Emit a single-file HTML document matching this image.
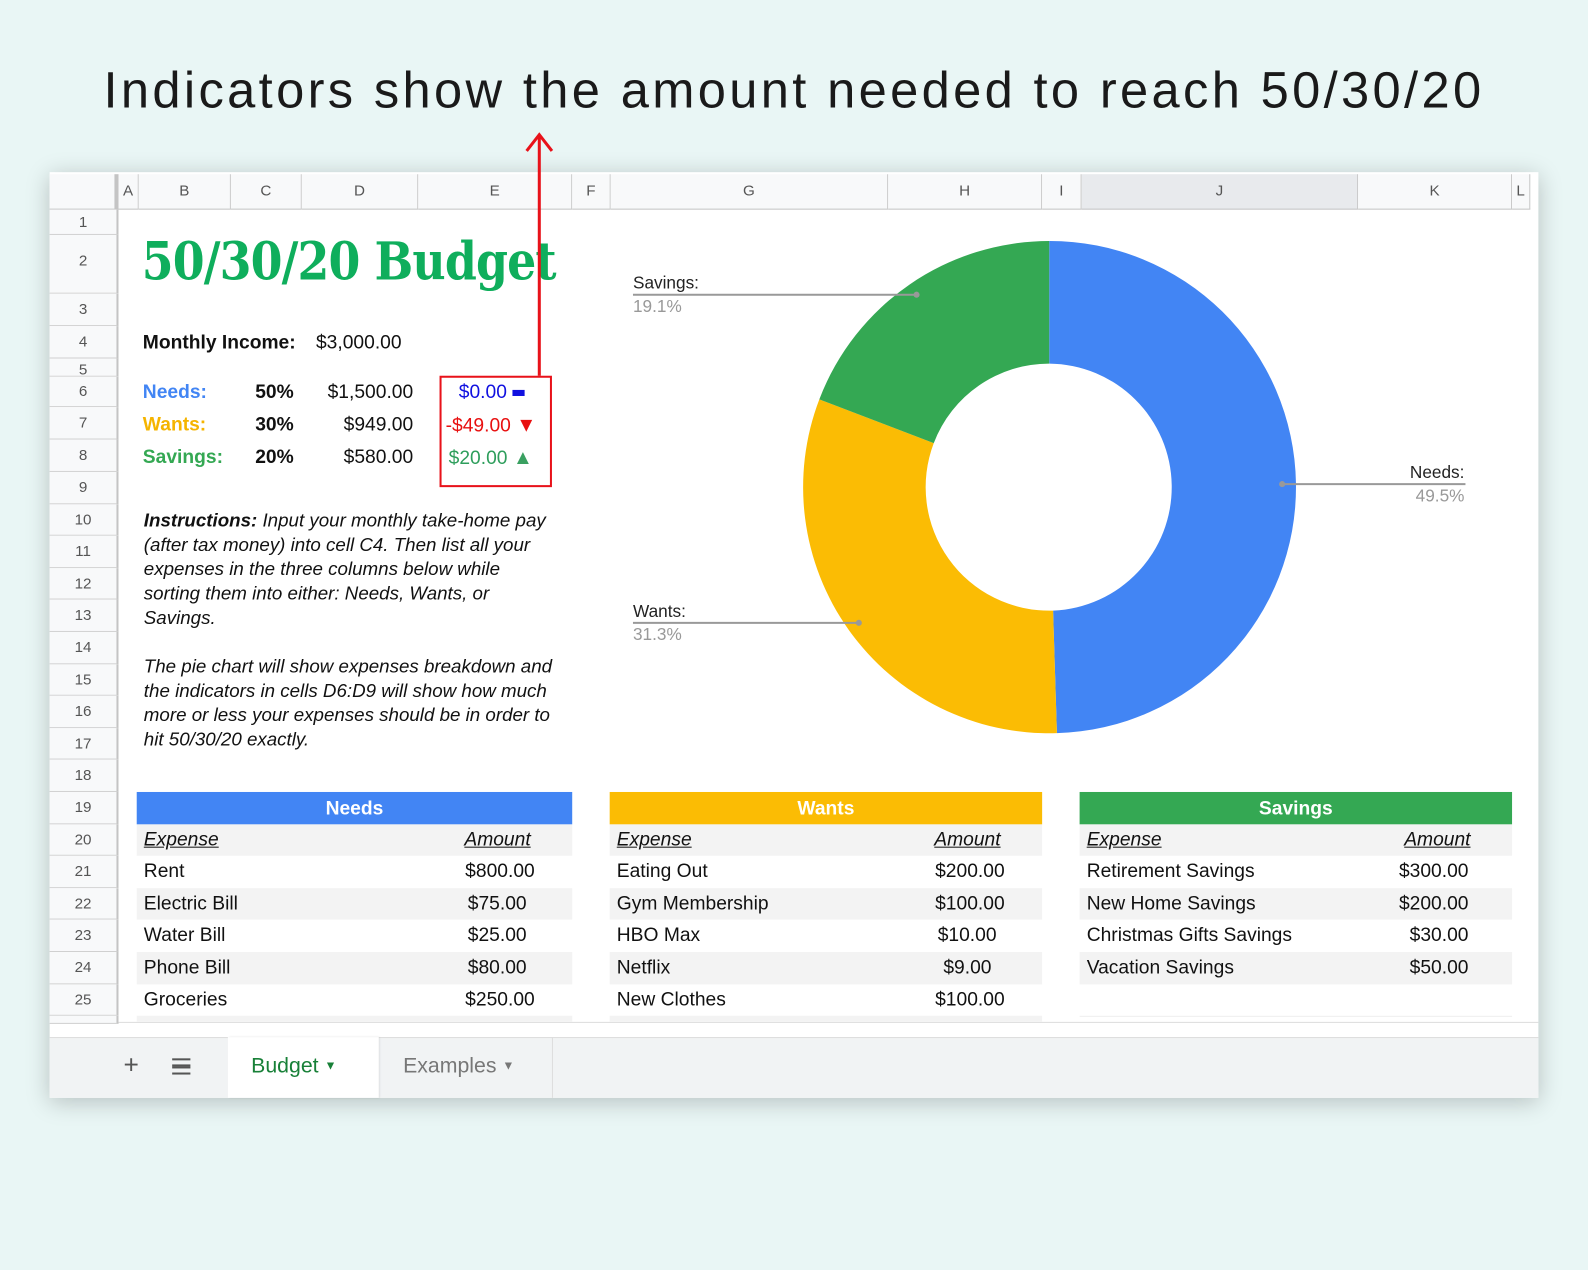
<!DOCTYPE html>
<html><head><meta charset="utf-8"><style>
*{margin:0;padding:0;box-sizing:border-box}
html,body{width:1588px;height:1270px;overflow:hidden;background:#e9f6f5}
#w{position:absolute;left:0;top:0;width:1568px;height:1254px;transform:scale(1.01276);transform-origin:0 0;font-family:"Liberation Sans",sans-serif}
.a{position:absolute;white-space:nowrap}
.card{position:absolute;left:49px;top:170px;width:1470px;height:914px;background:#fff;box-shadow:0 4px 22px rgba(0,0,0,.22)}
.ch{position:absolute;top:172px;height:35px;border-right:1px solid #c8c8c8;border-bottom:1px solid #c4c4c4;background:#f8f9fa;color:#555;font-size:15px;text-align:center;line-height:34px}
.rh{position:absolute;left:49px;width:68px;border-bottom:1px solid #d0d0d0;border-right:2px solid #c4c4c4;background:#f8f9fa;color:#555;font-size:15px;text-align:center}
.t{font-size:19px;color:#111}
.tr{position:absolute;height:31.6px;font-size:19px;color:#111;line-height:32px}
.g{background:#f3f3f3}
.hd{color:#fff;font-weight:bold;text-align:center;font-size:19px;line-height:34px}
.ins{position:absolute;left:142px;font-size:18.5px;font-style:italic;color:#111;line-height:24px;white-space:nowrap}
</style></head><body><div id="w">
<div class="a" style="left:0;width:1568px;top:60px;text-align:center;font-size:50px;color:#1a1a1a;letter-spacing:3.3px">Indicators show the amount needed to reach 50/30/20</div>
<div class="card"></div>
<!-- column headers -->
<div class="ch" style="left:49px;width:68px;border-right:4px solid #c4c4c4"></div>
<div class="ch" style="left:117px;width:20px">A</div>
<div class="ch" style="left:137px;width:91px">B</div>
<div class="ch" style="left:228px;width:70px">C</div>
<div class="ch" style="left:298px;width:115px">D</div>
<div class="ch" style="left:413px;width:152px">E</div>
<div class="ch" style="left:565px;width:38px">F</div>
<div class="ch" style="left:603px;width:274px">G</div>
<div class="ch" style="left:877px;width:152px">H</div>
<div class="ch" style="left:1029px;width:39px">I</div>
<div class="ch" style="left:1068px;width:273px;background:#e8eaed">J</div>
<div class="ch" style="left:1341px;width:152px">K</div>
<div class="ch" style="left:1493px;width:18px">L</div>
<!-- row headers -->
<div class="rh" style="top:207px;height:25px;line-height:26px">1</div>
<div class="rh" style="top:232px;height:58px;line-height:52px">2</div>
<div class="rh" style="top:290px;height:32px;line-height:32px">3</div>
<div class="rh" style="top:322px;height:32px;line-height:32px">4</div>
<div class="rh" style="top:354px;height:18px;line-height:24px;overflow:hidden">5</div>
<div class="rh" style="top:372px;height:30px;line-height:30px">6</div>
<div class="rh" style="top:402px;height:32px;line-height:32px">7</div>
<div class="rh" style="top:434px;height:32px;line-height:32px">8</div>
<div class="rh" style="top:466px;height:31.6px;line-height:31px">9</div>
<div class="rh" style="top:497.6px;height:31.6px;line-height:31px">10</div>
<div class="rh" style="top:529.2px;height:31.6px;line-height:31px">11</div>
<div class="rh" style="top:560.8px;height:31.6px;line-height:31px">12</div>
<div class="rh" style="top:592.4px;height:31.6px;line-height:31px">13</div>
<div class="rh" style="top:624px;height:31.6px;line-height:31px">14</div>
<div class="rh" style="top:655.6px;height:31.6px;line-height:31px">15</div>
<div class="rh" style="top:687.2px;height:31.6px;line-height:31px">16</div>
<div class="rh" style="top:718.8px;height:31.6px;line-height:31px">17</div>
<div class="rh" style="top:750.4px;height:31.6px;line-height:31px">18</div>
<div class="rh" style="top:782px;height:31.6px;line-height:31px">19</div>
<div class="rh" style="top:813.6px;height:31.6px;line-height:31px">20</div>
<div class="rh" style="top:845.2px;height:31.6px;line-height:31px">21</div>
<div class="rh" style="top:876.8px;height:31.6px;line-height:31px">22</div>
<div class="rh" style="top:908.4px;height:31.6px;line-height:31px">23</div>
<div class="rh" style="top:940px;height:31.6px;line-height:31px">24</div>
<div class="rh" style="top:971.6px;height:31.6px;line-height:31px">25</div>
<div class="rh" style="top:1003.2px;height:8px"></div>
<div class="a" style="left:117px;top:1009px;width:1402px;height:1px;background:#ddd"></div>
<div class="a" style="left:49px;top:1024px;width:1470px;height:60px;background:#f1f3f4;border-top:1px solid #ddd"></div>
<!-- title -->
<div class="a" style="left:140px;top:228px;font-size:52px;font-weight:bold;color:#0fae5c;font-family:'DejaVu Serif','Liberation Serif',serif;letter-spacing:-1px;transform:scaleX(0.87);transform-origin:0 0">50/30/20 Budget</div>
<div class="a t" style="left:141px;top:328px;font-weight:bold">Monthly Income:</div>
<div class="a t" style="left:312px;top:328px">$3,000.00</div>
<div class="a t" style="left:141px;top:377px;font-weight:bold;color:#4285f4">Needs:</div>
<div class="a t" style="left:141px;top:409px;font-weight:bold;color:#f5b400">Wants:</div>
<div class="a t" style="left:141px;top:441px;font-weight:bold;color:#34a853">Savings:</div>
<div class="a t" style="left:252px;top:377px;font-weight:bold">50%</div>
<div class="a t" style="left:252px;top:409px;font-weight:bold">30%</div>
<div class="a t" style="left:252px;top:441px;font-weight:bold">20%</div>
<div class="a t" style="right:1160px;top:377px">$1,500.00</div>
<div class="a t" style="right:1160px;top:409px">$949.00</div>
<div class="a t" style="right:1160px;top:441px">$580.00</div>
<div class="a t" style="left:453px;top:377px;color:#1010e0">$0.00 <span style="display:inline-block;width:12px;height:6px;background:#1010e0;vertical-align:middle"></span></div>
<div class="a t" style="left:440px;top:409px;color:#e81010">-$49.00 <span style="font-size:20px">▼</span></div>
<div class="a t" style="left:443px;top:441px;color:#2e9e5c">$20.00 <span style="font-size:20px;color:#3aa061">▲</span></div>
<div class="a" style="left:434px;top:371px;width:111px;height:110px;border:2px solid #e8121a"></div>
<svg class="a" style="left:0;top:0" width="1568" height="1254"><path d="M532.5 371V134M520 149L532.5 133L545 149" stroke="#e8121a" stroke-width="3" fill="none"/></svg>
<div class="ins" style="top:502px"><b>Instructions:</b> Input your monthly take-home pay<br>(after tax money) into cell C4. Then list all your<br>expenses in the three columns below while<br>sorting them into either: Needs, Wants, or<br>Savings.</div>
<div class="ins" style="top:646px">The pie chart will show expenses breakdown and<br>the indicators in cells D6:D9 will show how much<br>more or less your expenses should be in order to<br>hit 50/30/20 exactly.</div>
<!-- chart -->
<svg class="a" style="left:0;top:0" width="1568" height="1254">
<path d="M1036 238A243 243 0 0 1 1043.6 723.9L1039.8 602.9A122 122 0 0 0 1036 359Z" fill="#4285f4"/>
<path d="M1043.6 723.9A243 243 0 0 1 809 394.3L922 437.5A122 122 0 0 0 1039.8 602.9Z" fill="#fbbc04"/>
<path d="M809 394.3A243 243 0 0 1 1036 238L1036 359A122 122 0 0 0 922 437.5Z" fill="#34a853"/>
<g stroke="#999" stroke-width="2"><line x1="625" y1="291" x2="905" y2="291"/><line x1="1266" y1="478" x2="1447" y2="478"/><line x1="625" y1="615" x2="848" y2="615"/></g>
<g fill="#999"><circle cx="905" cy="291" r="3"/><circle cx="1266" cy="478" r="3"/><circle cx="848" cy="615" r="3"/></g>
<g font-family="Liberation Sans,sans-serif" font-size="17"><text x="625" y="285" fill="#222">Savings:</text><text x="625" y="308" fill="#999">19.1%</text>
<text x="1446" y="472" fill="#222" text-anchor="end">Needs:</text><text x="1446" y="495" fill="#999" text-anchor="end">49.5%</text>
<text x="625" y="609" fill="#222">Wants:</text><text x="625" y="632" fill="#999">31.3%</text></g>
</svg>
<!-- tables -->
<div class="tr hd" style="left:135px;top:782px;width:430px;background:#4285f4">Needs</div>
<div class="tr hd" style="left:602px;top:782px;width:427px;background:#fbbc04">Wants</div>
<div class="tr hd" style="left:1066px;top:782px;width:427px;background:#34a853">Savings</div>

<div class="tr g" style="left:135px;top:813.6px;width:430px"><i style="text-decoration:underline;position:absolute;left:7px">Expense</i><i style="text-decoration:underline;position:absolute;right:41px">Amount</i></div>
<div class="tr g" style="left:602px;top:813.6px;width:427px"><i style="text-decoration:underline;position:absolute;left:7px">Expense</i><i style="text-decoration:underline;position:absolute;right:41px">Amount</i></div>
<div class="tr g" style="left:1066px;top:813.6px;width:427px"><i style="text-decoration:underline;position:absolute;left:7px">Expense</i><i style="text-decoration:underline;position:absolute;right:41px">Amount</i></div>

<div class="tr" style="left:135px;top:845.2px;width:430px"><span class="a" style="left:7px">Rent</span><span class="a" style="right:37px">$800.00</span></div>
<div class="tr g" style="left:135px;top:876.8px;width:430px"><span class="a" style="left:7px">Electric Bill</span><span class="a" style="right:45px">$75.00</span></div>
<div class="tr" style="left:135px;top:908.4px;width:430px"><span class="a" style="left:7px">Water Bill</span><span class="a" style="right:45px">$25.00</span></div>
<div class="tr g" style="left:135px;top:940px;width:430px"><span class="a" style="left:7px">Phone Bill</span><span class="a" style="right:45px">$80.00</span></div>
<div class="tr" style="left:135px;top:971.6px;width:430px"><span class="a" style="left:7px">Groceries</span><span class="a" style="right:37px">$250.00</span></div>
<div class="a g" style="left:135px;top:1003px;width:430px;height:6px"></div>

<div class="tr" style="left:602px;top:845.2px;width:427px"><span class="a" style="left:7px">Eating Out</span><span class="a" style="right:37px">$200.00</span></div>
<div class="tr g" style="left:602px;top:876.8px;width:427px"><span class="a" style="left:7px">Gym Membership</span><span class="a" style="right:37px">$100.00</span></div>
<div class="tr" style="left:602px;top:908.4px;width:427px"><span class="a" style="left:7px">HBO Max</span><span class="a" style="right:45px">$10.00</span></div>
<div class="tr g" style="left:602px;top:940px;width:427px"><span class="a" style="left:7px">Netflix</span><span class="a" style="right:50px">$9.00</span></div>
<div class="tr" style="left:602px;top:971.6px;width:427px"><span class="a" style="left:7px">New Clothes</span><span class="a" style="right:37px">$100.00</span></div>
<div class="a g" style="left:602px;top:1003px;width:427px;height:6px"></div>

<div class="tr" style="left:1066px;top:845.2px;width:427px"><span class="a" style="left:7px">Retirement Savings</span><span class="a" style="right:43px">$300.00</span></div>
<div class="tr g" style="left:1066px;top:876.8px;width:427px"><span class="a" style="left:7px">New Home Savings</span><span class="a" style="right:43px">$200.00</span></div>
<div class="tr" style="left:1066px;top:908.4px;width:427px"><span class="a" style="left:7px">Christmas Gifts Savings</span><span class="a" style="right:43px">$30.00</span></div>
<div class="tr g" style="left:1066px;top:940px;width:427px"><span class="a" style="left:7px">Vacation Savings</span><span class="a" style="right:43px">$50.00</span></div>
<div class="a" style="left:1066px;top:1003px;width:427px;height:1px;background:#eee"></div>
<!-- tabs -->
<div class="a" style="left:122px;top:1036px;font-size:26px;color:#555">+</div>
<div class="a" style="left:170px;top:1045px;width:18px;height:16px;border-top:2px solid #555;border-bottom:2px solid #555"><div style="margin-top:4px;height:4px;border-top:2px solid #555;border-bottom:2px solid #555"></div></div>
<div class="a" style="left:225px;top:1024px;width:149px;height:60px;background:#fff;box-shadow:1px 0 2px rgba(0,0,0,.1)"></div>
<div class="a" style="left:248px;top:1041px;font-size:21px;color:#188038">Budget <span style="font-size:12px;vertical-align:3px">▼</span></div>
<div class="a" style="left:376px;top:1024px;width:170px;height:60px;border-right:1px solid #ddd"></div>
<div class="a" style="left:398px;top:1041px;font-size:21px;color:#777">Examples <span style="font-size:12px;vertical-align:3px">▼</span></div>
</div></body></html>
